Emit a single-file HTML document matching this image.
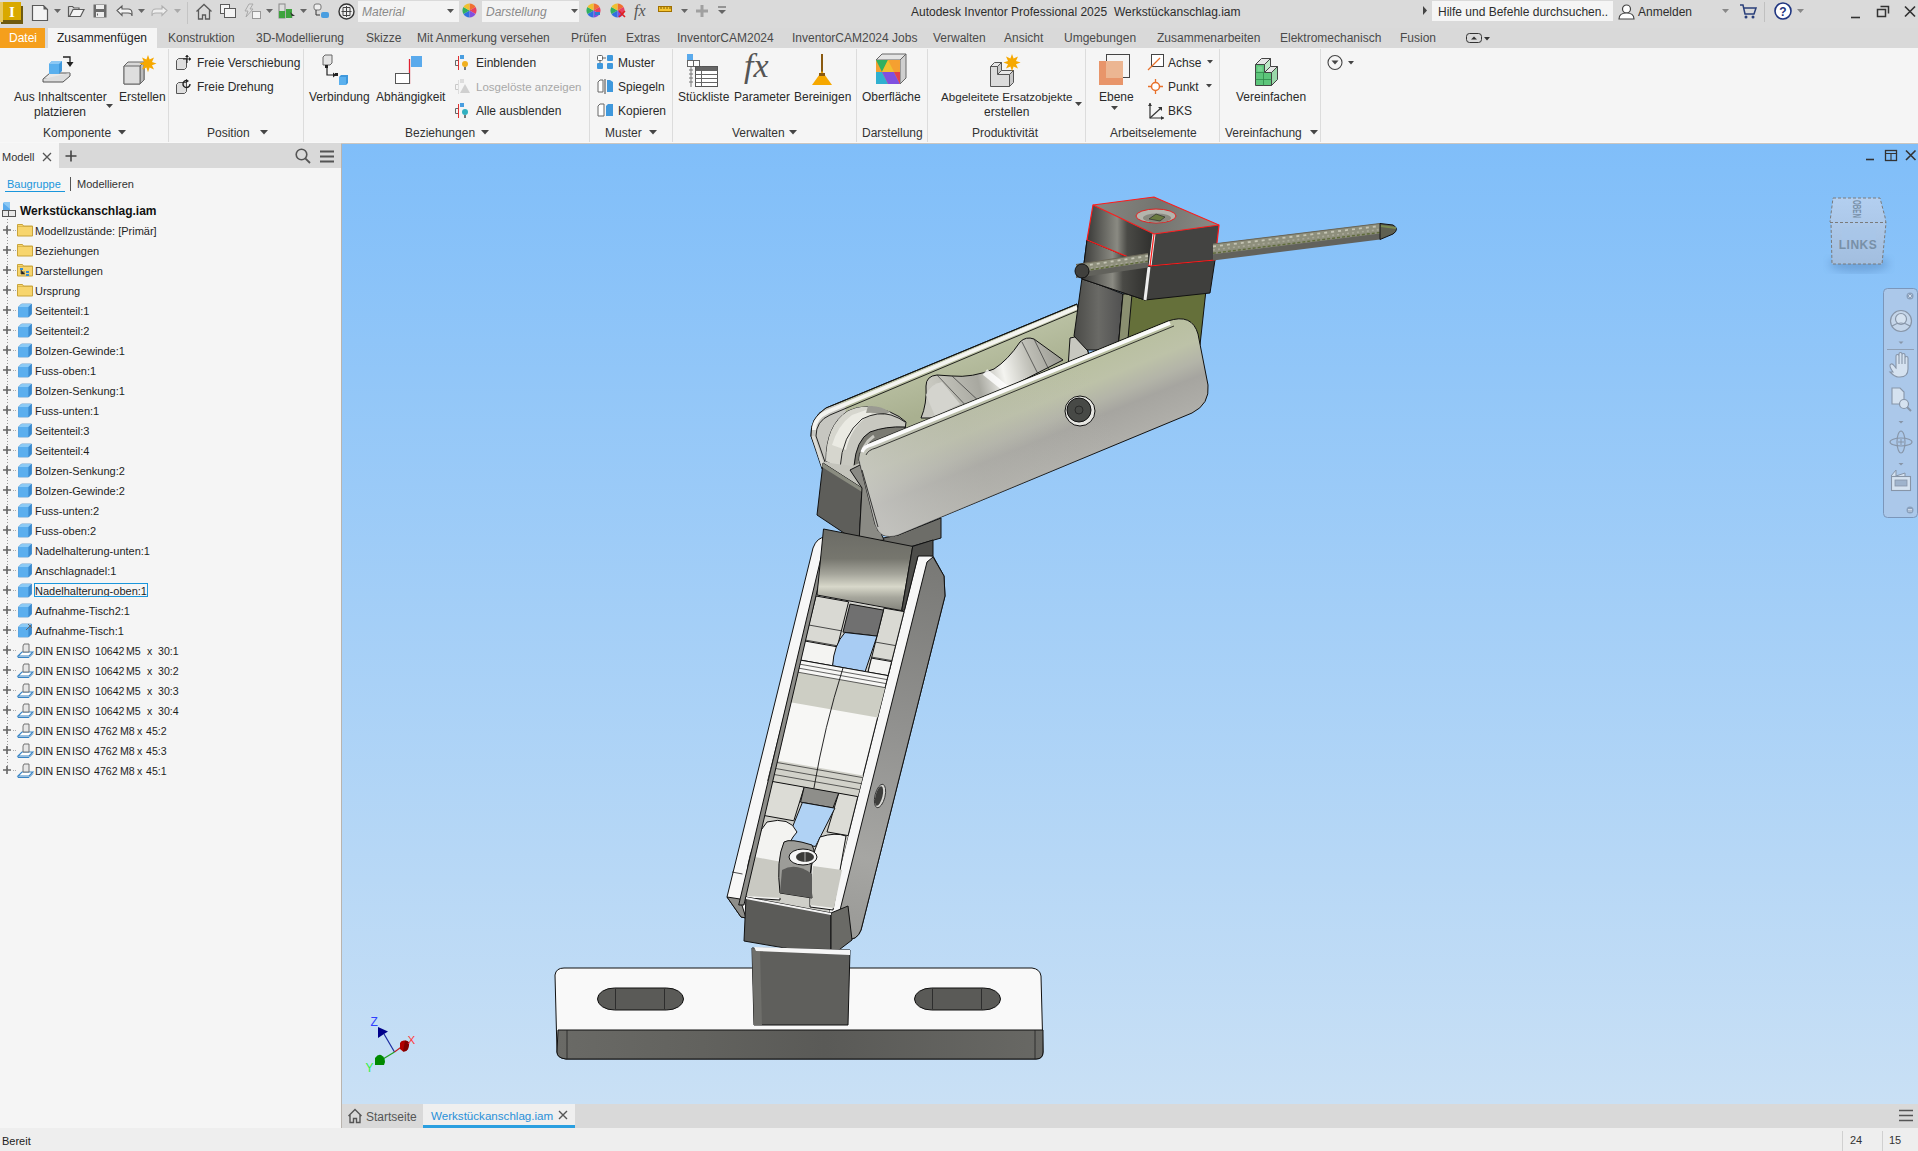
<!DOCTYPE html>
<html><head><meta charset="utf-8"><title>Inventor</title>
<style>
*{margin:0;padding:0;box-sizing:border-box}
html,body{width:1918px;height:1151px;overflow:hidden}
body{position:relative;font-family:"Liberation Sans",sans-serif;font-size:12px;color:#2a2a2a;background:#f5f5f5}
.a{position:absolute;white-space:nowrap}
svg{position:absolute;overflow:visible}
</style></head><body>

<div class="a" style="left:0px;top:0px;width:1918px;height:28px;background:#dadada;"></div>
<div class="a" style="left:0px;top:28px;width:1918px;height:20px;background:#d9d9d9;"></div>
<div class="a" style="left:0px;top:48px;width:1918px;height:95px;background:#f5f5f5;"></div>
<div class="a" style="left:0px;top:142px;width:1918px;height:1px;background:#f8f8f8;"></div>
<div class="a" style="left:0px;top:144px;width:341px;height:984px;background:#f5f5f5;"></div>
<div class="a" style="left:0px;top:143px;width:341px;height:25px;background:#d9d9d9;"></div>
<div class="a" style="left:0px;top:143px;width:59px;height:25px;background:#f5f5f5;"></div>
<div class="a" style="left:341px;top:143px;width:1px;height:985px;background:#b9b4ae;"></div>
<div class="a" style="left:341px;top:143px;width:1577px;height:1px;background:#cbc6c0;"></div>
<div class="a" style="left:342px;top:144px;width:1576px;height:960px;background:linear-gradient(#80bef9,#c9e0f5);"></div>
<div class="a" style="left:342px;top:1104px;width:1576px;height:24px;background:#d9d9d9;"></div>
<div class="a" style="left:423px;top:1104px;width:152px;height:24px;background:#efefef;"></div>
<div class="a" style="left:423px;top:1125px;width:152px;height:3px;background:#2a9fe0;"></div>
<div class="a" style="left:0px;top:1128px;width:1918px;height:23px;background:#eeeeee;"></div>
<svg style="left:0;top:0" width="26" height="26"><rect x="1" y="6" width="22" height="18" fill="#6e5a10"/><rect x="0" y="2" width="3" height="20" fill="#e8c860"/><rect x="3" y="2" width="18" height="18" fill="#d9a900"/><text x="12" y="17" font-family="Liberation Serif" font-weight="bold" font-size="15" fill="#fff" text-anchor="middle">I</text></svg>
<svg style="left:32px;top:4px" width="20" height="16"><path d="M0.5 1.5h11l4 4v11h-15z" fill="#f4f4f4" stroke="#5a5a5a" stroke-width="1.2"/><path d="M11.5 1.5l4 4h-4z" fill="#5a5a5a"/></svg>
<svg style="left:54px;top:9px" width="8" height="5"><path d="M0 0h7l-3.5 4z" fill="#666"/></svg>
<svg style="left:68px;top:4px" width="18" height="14"><path d="M0.5 2.5v10h12l3.5-7h-11l-3.5 7M0.5 2.5h4l1.5 1.5h5v1.5" fill="#f4f4f4" stroke="#5a5a5a" stroke-width="1.2"/></svg>
<svg style="left:93px;top:4px" width="15" height="15"><rect x="0.5" y="0.5" width="13" height="13" fill="#6b6b6b"/><rect x="3" y="1" width="8" height="4" fill="#eee"/><rect x="3" y="8" width="8" height="5" fill="#eee"/><rect x="4" y="9.5" width="1" height="2" fill="#666"/></svg>
<svg style="left:116px;top:5px" width="18" height="12"><path d="M1 5.5l5-4.5v3h6c3 0 4 2 4 4v3c0-2-1-3-4-3h-6v2.5z" fill="#f4f4f4" stroke="#5a5a5a" stroke-width="1.1"/></svg>
<svg style="left:138px;top:9px" width="8" height="5"><path d="M0 0h7l-3.5 4z" fill="#666"/></svg>
<svg style="left:151px;top:5px" width="18" height="12"><path d="M16 5.5l-5-4.5v3h-6c-3 0-4 2-4 4v3c0-2 1-3 4-3h6v2.5z" fill="#eee" stroke="#b0b0b0" stroke-width="1.1"/></svg>
<svg style="left:174px;top:9px" width="8" height="5"><path d="M0 0h7l-3.5 4z" fill="#aaa"/></svg>
<div class="a" style="left:187px;top:2px;width:1px;height:22px;background:#c4c4c4;"></div>
<svg style="left:195px;top:3px" width="18" height="17"><path d="M1.5 8.5l7.5-7 7.5 7M3.5 7v9h4v-4h3v4h4v-9" fill="none" stroke="#5a5a5a" stroke-width="1.3"/></svg>
<svg style="left:220px;top:4px" width="17" height="15"><rect x="0.5" y="0.5" width="9" height="9" fill="#f4f4f4" stroke="#5a5a5a"/><rect x="4.5" y="4.5" width="11" height="9" fill="#f4f4f4" stroke="#5a5a5a"/></svg>
<svg style="left:244px;top:3px" width="18" height="16"><path d="M5 1l-4 7h3l-2 6 7-8h-3l3-5z" fill="#ddd" stroke="#aaa"/><rect x="8.5" y="8.5" width="8" height="7" fill="#f4f4f4" stroke="#999"/></svg>
<svg style="left:266px;top:9px" width="8" height="5"><path d="M0 0h7l-3.5 4z" fill="#666"/></svg>
<svg style="left:278px;top:3px" width="18" height="17"><rect x="1" y="1" width="6" height="14" fill="#ddd" stroke="#888"/><rect x="1" y="8" width="6" height="7" fill="#3fa33f"/><rect x="8" y="6" width="6" height="9" fill="#3fa33f"/><path d="M12 9l5 4h-3l1 3z" fill="#333"/></svg>
<svg style="left:300px;top:9px" width="8" height="5"><path d="M0 0h7l-3.5 4z" fill="#666"/></svg>
<svg style="left:313px;top:3px" width="18" height="17"><rect x="1" y="1" width="7" height="6" rx="2" fill="#eee" stroke="#777"/><rect x="8" y="9" width="8" height="6" rx="2" fill="#4a9ee0"/><path d="M3 7v5h4" fill="none" stroke="#333"/></svg>
<svg style="left:338px;top:3px" width="17" height="17"><circle cx="8.5" cy="8.5" r="7.5" fill="#eee" stroke="#333" stroke-width="1.4"/><path d="M5 4.5h7M3.5 8.5h10M5 12.5h7M5 4.5v8M8.5 3v11M12 4.5v8" stroke="#444" stroke-width="1"/></svg>
<div class="a" style="left:358px;top:1px;width:101px;height:21px;background:#f3f3f3;"></div>
<div class="a" style="left:362px;top:4.8px;font-size:12px;line-height:14px;color:#8a8a8a;font-style:italic">Material</div>
<svg style="left:447px;top:9px" width="8" height="5"><path d="M0 0h7l-3.5 4z" fill="#555"/></svg>
<svg style="left:462px;top:3px" width="15" height="15"><g transform="translate(7.5,7.5)"><path d="M0 0L0-7A7 7 0 0 1 6.06-3.5z" fill="#f07030"/><path d="M0 0L6.06-3.5A7 7 0 0 1 6.06 3.5z" fill="#e84060"/><path d="M0 0L6.06 3.5A7 7 0 0 1 0 7z" fill="#8050e0"/><path d="M0 0L0 7A7 7 0 0 1 -6.06 3.5z" fill="#3070e0"/><path d="M0 0L-6.06 3.5A7 7 0 0 1 -6.06-3.5z" fill="#30b060"/><path d="M0 0L-6.06-3.5A7 7 0 0 1 0-7z" fill="#f0c030"/></g></svg>
<div class="a" style="left:482px;top:1px;width:97px;height:21px;background:#f3f3f3;"></div>
<div class="a" style="left:486px;top:4.8px;font-size:12px;line-height:14px;color:#8a8a8a;font-style:italic">Darstellung</div>
<svg style="left:571px;top:9px" width="8" height="5"><path d="M0 0h7l-3.5 4z" fill="#555"/></svg>
<svg style="left:586px;top:3px" width="15" height="15"><g transform="translate(7.5,7.5)"><path d="M0 0L0-7A7 7 0 0 1 6.06-3.5z" fill="#f07030"/><path d="M0 0L6.06-3.5A7 7 0 0 1 6.06 3.5z" fill="#e84060"/><path d="M0 0L6.06 3.5A7 7 0 0 1 0 7z" fill="#8050e0"/><path d="M0 0L0 7A7 7 0 0 1 -6.06 3.5z" fill="#3070e0"/><path d="M0 0L-6.06 3.5A7 7 0 0 1 -6.06-3.5z" fill="#30b060"/><path d="M0 0L-6.06-3.5A7 7 0 0 1 0-7z" fill="#f0c030"/></g></svg>
<svg style="left:595px;top:12px" width="6" height="6"><path d="M0 0h5v3h-5z" fill="#2b7fd0"/></svg>
<svg style="left:610px;top:3px" width="15" height="15"><g transform="translate(7.5,7.5)"><path d="M0 0L0-7A7 7 0 0 1 6.06-3.5z" fill="#f07030"/><path d="M0 0L6.06-3.5A7 7 0 0 1 6.06 3.5z" fill="#e84060"/><path d="M0 0L6.06 3.5A7 7 0 0 1 0 7z" fill="#8050e0"/><path d="M0 0L0 7A7 7 0 0 1 -6.06 3.5z" fill="#3070e0"/><path d="M0 0L-6.06 3.5A7 7 0 0 1 -6.06-3.5z" fill="#30b060"/><path d="M0 0L-6.06-3.5A7 7 0 0 1 0-7z" fill="#f0c030"/></g></svg>
<svg style="left:619px;top:11px" width="7" height="7"><path d="M0 0l6 6M6 0l-6 6" stroke="#e02020" stroke-width="1.6"/></svg>
<div class="a" style="left:634px;top:1px;font-family:'Liberation Serif';font-style:italic;font-size:16px;color:#555;line-height:20px">fx</div>
<svg style="left:658px;top:5px" width="15" height="8"><rect x="0.5" y="1.5" width="13" height="5" fill="#f5c430" stroke="#a07000"/><path d="M3 2v2M6 2v2M9 2v2M12 2v2" stroke="#7a5a00"/></svg>
<svg style="left:681px;top:9px" width="8" height="5"><path d="M0 0h7l-3.5 4z" fill="#666"/></svg>
<svg style="left:695px;top:4px" width="14" height="14"><path d="M7 1v12M1 7h12" stroke="#a0a0a0" stroke-width="3"/></svg>
<svg style="left:717px;top:6px" width="10" height="10"><path d="M1 1h8" stroke="#666" stroke-width="1.2"/><path d="M1 4h8l-4 4z" fill="#666"/></svg>
<div class="a" style="left:911px;top:5.3px;font-size:12px;line-height:14px;color:#2d2d2d;">Autodesk Inventor Professional 2025</div>
<div class="a" style="left:1114px;top:5.3px;font-size:12px;line-height:14px;color:#2d2d2d;">Werkstückanschlag.iam</div>
<svg style="left:1423px;top:6px" width="5" height="9"><path d="M0 0l4 4.5-4 4.5z" fill="#444"/></svg>
<div class="a" style="left:1432px;top:1px;width:181px;height:20px;background:#f5f5f5;"></div>
<div class="a" style="left:1438px;top:4.8px;font-size:12px;line-height:14px;color:#2d2d2d;">Hilfe und Befehle durchsuchen..</div>
<svg style="left:1618px;top:3px" width="17" height="17"><circle cx="8.5" cy="6" r="4" fill="#fff" stroke="#444" stroke-width="1.2"/><path d="M1 16c0-4 3-6 7.5-6s7.5 2 7.5 6z" fill="#fff" stroke="#444" stroke-width="1.2"/></svg>
<div class="a" style="left:1638px;top:5.3px;font-size:12px;line-height:14px;color:#2d2d2d;">Anmelden</div>
<svg style="left:1722px;top:9px" width="8" height="5"><path d="M0 0h7l-3.5 4z" fill="#888"/></svg>
<svg style="left:1739px;top:3px" width="18" height="16"><path d="M1 2h3l2 9h9l2-6h-12" fill="none" stroke="#2a3f7a" stroke-width="1.5"/><circle cx="7" cy="14" r="1.5" fill="#2a3f7a"/><circle cx="14" cy="14" r="1.5" fill="#2a3f7a"/></svg>
<div class="a" style="left:1764px;top:2px;width:1px;height:20px;background:#c0c0c0;"></div>
<svg style="left:1774px;top:2px" width="19" height="19"><circle cx="9" cy="9" r="8" fill="#fff" stroke="#1f3580" stroke-width="1.6"/><text x="9" y="13.5" font-family="Liberation Sans" font-weight="bold" font-size="12" fill="#1f3580" text-anchor="middle">?</text></svg>
<svg style="left:1797px;top:9px" width="8" height="5"><path d="M0 0h7l-3.5 4z" fill="#888"/></svg>
<svg style="left:1850px;top:4px" width="68" height="16"><path d="M1 13.5h9" stroke="#333" stroke-width="1.6"/><path d="M27.5 5.5h8v7h-8zM30.5 2.5h8v7" fill="none" stroke="#333" stroke-width="1.5"/><path d="M55 2.5l10 10M65 2.5l-10 10" stroke="#333" stroke-width="1.7"/></svg>
<div class="a" style="left:0px;top:28px;width:45px;height:20px;background:#f59f1c;"></div>
<div class="a" style="left:9px;top:30.8px;font-size:12px;line-height:14px;color:#ffffff;">Datei</div>
<div class="a" style="left:48px;top:28px;width:109px;height:20px;background:#f5f5f5;"></div>
<div class="a" style="left:57px;top:30.8px;font-size:12px;line-height:14px;color:#222;">Zusammenfügen</div>
<div class="a" style="left:168px;top:30.8px;font-size:12px;line-height:14px;color:#4a4a4a;">Konstruktion</div>
<div class="a" style="left:256px;top:30.8px;font-size:12px;line-height:14px;color:#4a4a4a;">3D-Modellierung</div>
<div class="a" style="left:366px;top:30.8px;font-size:12px;line-height:14px;color:#4a4a4a;">Skizze</div>
<div class="a" style="left:417px;top:30.8px;font-size:12px;line-height:14px;color:#4a4a4a;">Mit Anmerkung versehen</div>
<div class="a" style="left:571px;top:30.8px;font-size:12px;line-height:14px;color:#4a4a4a;">Prüfen</div>
<div class="a" style="left:626px;top:30.8px;font-size:12px;line-height:14px;color:#4a4a4a;">Extras</div>
<div class="a" style="left:677px;top:30.8px;font-size:12px;line-height:14px;color:#4a4a4a;">InventorCAM2024</div>
<div class="a" style="left:792px;top:30.8px;font-size:12px;line-height:14px;color:#4a4a4a;">InventorCAM2024 Jobs</div>
<div class="a" style="left:933px;top:30.8px;font-size:12px;line-height:14px;color:#4a4a4a;">Verwalten</div>
<div class="a" style="left:1004px;top:30.8px;font-size:12px;line-height:14px;color:#4a4a4a;">Ansicht</div>
<div class="a" style="left:1064px;top:30.8px;font-size:12px;line-height:14px;color:#4a4a4a;">Umgebungen</div>
<div class="a" style="left:1157px;top:30.8px;font-size:12px;line-height:14px;color:#4a4a4a;">Zusammenarbeiten</div>
<div class="a" style="left:1280px;top:30.8px;font-size:12px;line-height:14px;color:#4a4a4a;">Elektromechanisch</div>
<div class="a" style="left:1400px;top:30.8px;font-size:12px;line-height:14px;color:#4a4a4a;">Fusion</div>
<svg style="left:1466px;top:33px" width="26" height="12"><rect x="0.5" y="0.5" width="15" height="9" rx="3" fill="none" stroke="#333"/><path d="M5 6.5h6l-3-3z" fill="#333"/><path d="M18 4h6l-3 3.5z" fill="#333"/></svg>
<div class="a" style="left:168px;top:49px;width:1px;height:93px;background:#dcdcdc;"></div>
<div class="a" style="left:303px;top:49px;width:1px;height:93px;background:#dcdcdc;"></div>
<div class="a" style="left:589px;top:49px;width:1px;height:93px;background:#dcdcdc;"></div>
<div class="a" style="left:672px;top:49px;width:1px;height:93px;background:#dcdcdc;"></div>
<div class="a" style="left:856px;top:49px;width:1px;height:93px;background:#dcdcdc;"></div>
<div class="a" style="left:927px;top:49px;width:1px;height:93px;background:#dcdcdc;"></div>
<div class="a" style="left:1085px;top:49px;width:1px;height:93px;background:#dcdcdc;"></div>
<div class="a" style="left:1219px;top:49px;width:1px;height:93px;background:#dcdcdc;"></div>
<div class="a" style="left:1320px;top:49px;width:1px;height:93px;background:#dcdcdc;"></div>
<div class="a" style="left:43px;top:125.8px;font-size:12px;line-height:14px;color:#333;">Komponente</div>
<svg style="left:118px;top:130px" width="9" height="6"><path d="M0 0h8l-4 4.5z" fill="#444"/></svg>
<div class="a" style="left:207px;top:125.8px;font-size:12px;line-height:14px;color:#333;">Position</div>
<svg style="left:260px;top:130px" width="9" height="6"><path d="M0 0h8l-4 4.5z" fill="#444"/></svg>
<div class="a" style="left:405px;top:125.8px;font-size:12px;line-height:14px;color:#333;">Beziehungen</div>
<svg style="left:481px;top:130px" width="9" height="6"><path d="M0 0h8l-4 4.5z" fill="#444"/></svg>
<div class="a" style="left:605px;top:125.8px;font-size:12px;line-height:14px;color:#333;">Muster</div>
<svg style="left:649px;top:130px" width="9" height="6"><path d="M0 0h8l-4 4.5z" fill="#444"/></svg>
<div class="a" style="left:732px;top:125.8px;font-size:12px;line-height:14px;color:#333;">Verwalten</div>
<svg style="left:789px;top:130px" width="9" height="6"><path d="M0 0h8l-4 4.5z" fill="#444"/></svg>
<div class="a" style="left:862px;top:125.8px;font-size:12px;line-height:14px;color:#333;">Darstellung</div>
<div class="a" style="left:972px;top:125.8px;font-size:12px;line-height:14px;color:#333;">Produktivität</div>
<div class="a" style="left:1110px;top:125.8px;font-size:12px;line-height:14px;color:#333;">Arbeitselemente</div>
<div class="a" style="left:1225px;top:125.8px;font-size:12px;line-height:14px;color:#333;">Vereinfachung</div>
<svg style="left:1310px;top:130px" width="9" height="6"><path d="M0 0h8l-4 4.5z" fill="#444"/></svg>
<svg style="left:42px;top:55px" width="36" height="30"><path d="M1 24l7-6h20l-7 6z" fill="#e8e8e8" stroke="#555" stroke-width="1"/><path d="M1 24v3h20l7-6v-3" fill="#ddd" stroke="#555"/><path d="M7 9l3-3h10v10l-3 3h-10z" fill="#3f98dc"/><path d="M7 9h10v10h-10z" fill="#5ab0ee"/><path d="M7 9l3-3h10l-3 3z" fill="#8cc8f4"/><path d="M21 2h7v6" fill="none" stroke="#222" stroke-width="1.3"/><path d="M24.5 7h7l-3.5 5z" fill="#222"/></svg>
<div class="a" style="left:14px;top:89.8px;font-size:12px;line-height:14px;color:#2a2a2a;">Aus Inhaltscenter</div>
<div class="a" style="left:34px;top:104.8px;font-size:12px;line-height:14px;color:#2a2a2a;">platzieren</div>
<svg style="left:106px;top:104px" width="8" height="5"><path d="M0 0h7l-3.5 4z" fill="#444"/></svg>
<svg style="left:121px;top:53px" width="38" height="34"><path d="M3 13l4-4h16v18l-4 4h-16z" fill="#d8d8d8" stroke="#666"/><path d="M19 13l4-4v18l-4 4z" fill="#bcbcbc" stroke="#666"/><path d="M3 13h16v18h-16z" fill="#dedede" stroke="#666"/><path d="M27 2l1.6 4.6 4.4-2-2 4.4 4.6 1.6-4.6 1.6 2 4.4-4.4-2-1.6 4.6-1.6-4.6-4.4 2 2-4.4-4.6-1.6 4.6-1.6-2-4.4 4.4 2z" fill="#f6a800"/></svg>
<div class="a" style="left:119px;top:89.8px;font-size:12px;line-height:14px;color:#2a2a2a;">Erstellen</div>
<svg style="left:176px;top:55px" width="16" height="16"><path d="M0.5 5.5l2-2h8v9l-2 2h-8z" fill="#dedede" stroke="#555"/><path d="M11 0v8M7 4h8" stroke="#222" stroke-width="1.1"/><path d="M11 0l-2 2h4zM15 4l-2-2v4z" fill="#222"/></svg>
<div class="a" style="left:197px;top:55.8px;font-size:12px;line-height:14px;color:#2a2a2a;">Freie Verschiebung</div>
<svg style="left:176px;top:79px" width="16" height="16"><path d="M0.5 5.5l2-2h8v9l-2 2h-8z" fill="#dedede" stroke="#555"/><path d="M14 5a3.5 3.5 0 1 1 -3-3.4" fill="none" stroke="#222" stroke-width="1.4"/><path d="M10 0l3 2-3 2z" fill="#222"/></svg>
<div class="a" style="left:197px;top:79.8px;font-size:12px;line-height:14px;color:#2a2a2a;">Freie Drehung</div>
<svg style="left:322px;top:54px" width="34" height="32"><path d="M1 3l2-2h7v8l-2 2h-7z" fill="#e4e4e4" stroke="#666"/><path d="M5 13v8h6" fill="none" stroke="#222" stroke-width="1.2"/><path d="M11 18.5l3 2.5-3 2.5z" fill="#222"/><rect x="3" y="11" width="3" height="3" fill="#222"/><rect x="13" y="19" width="3" height="3" fill="#222"/><path d="M17 23l2-2h7v8l-2 2h-7z" fill="#3f98dc"/><path d="M17 23h7v8h-7z" fill="#5ab0ee"/></svg>
<div class="a" style="left:309px;top:89.8px;font-size:12px;line-height:14px;color:#2a2a2a;">Verbindung</div>
<svg style="left:394px;top:54px" width="36" height="32"><rect x="17" y="2" width="11" height="11" fill="#5aaaec"/><path d="M15.5 5v25" stroke="#e02030" stroke-width="1.3"/><rect x="1.5" y="19.5" width="14" height="10" fill="#fff" stroke="#555"/></svg>
<div class="a" style="left:376px;top:89.8px;font-size:12px;line-height:14px;color:#2a2a2a;">Abhängigkeit</div>
<svg style="left:455px;top:54px" width="16" height="17"><path d="M0.5 6.5h3M0.5 6.5v5h3" fill="none" stroke="#666"/><path d="M3.5 2v14" stroke="#e03030" stroke-width="1"/><rect x="5" y="1" width="4" height="4" fill="#4a9ee0"/><circle cx="10" cy="10" r="3" fill="#f0b020"/><rect x="9" y="13" width="2" height="3" fill="#777"/></svg>
<div class="a" style="left:476px;top:55.8px;font-size:12px;line-height:14px;color:#2a2a2a;">Einblenden</div>
<svg style="left:455px;top:78px" width="16" height="17"><path d="M0.5 6.5h3M0.5 6.5v5h3" fill="none" stroke="#c8c8c8"/><path d="M3.5 2v14" stroke="#ddd"/><rect x="5" y="1" width="4" height="4" fill="#ddd"/><path d="M10 6l5 9h-10z" fill="#d0d0d0"/></svg>
<div class="a" style="left:476px;top:80.0px;font-size:11.5px;line-height:14px;color:#a8a8a8;">Losgelöste anzeigen</div>
<svg style="left:455px;top:102px" width="16" height="17"><path d="M0.5 6.5h3M0.5 6.5v5h3" fill="none" stroke="#666"/><path d="M3.5 2v14" stroke="#e03030" stroke-width="1"/><rect x="5" y="1" width="4" height="4" fill="#4a9ee0"/><circle cx="10" cy="10" r="3" fill="#30b0c0"/><rect x="9" y="13" width="2" height="3" fill="#777"/></svg>
<div class="a" style="left:476px;top:103.8px;font-size:12px;line-height:14px;color:#2a2a2a;">Alle ausblenden</div>
<svg style="left:597px;top:55px" width="17" height="15"><rect x="0.5" y="0.5" width="5" height="5" rx="1" fill="#fff" stroke="#666"/><rect x="10" y="0" width="6" height="6" rx="1" fill="#3f98dc"/><rect x="0" y="8" width="6" height="6" rx="1" fill="#3f98dc"/><rect x="10" y="8" width="6" height="6" rx="1" fill="#3f98dc"/><path d="M6 3h3M3 6v2" stroke="#666"/></svg>
<div class="a" style="left:618px;top:55.8px;font-size:12px;line-height:14px;color:#2a2a2a;">Muster</div>
<svg style="left:597px;top:79px" width="17" height="15"><path d="M1 3l2-2h3v12h-5z" fill="#fff" stroke="#666"/><path d="M8 0v15" stroke="#444"/><path d="M10 1h3l3 2v10h-6z" fill="#3f98dc"/></svg>
<div class="a" style="left:618px;top:79.8px;font-size:12px;line-height:14px;color:#2a2a2a;">Spiegeln</div>
<svg style="left:597px;top:103px" width="17" height="15"><path d="M1 3l2-2h4v12h-6z" fill="#fff" stroke="#666"/><path d="M9 3l2-2h5v12h-7z" fill="#3f98dc"/></svg>
<div class="a" style="left:618px;top:103.8px;font-size:12px;line-height:14px;color:#2a2a2a;">Kopieren</div>
<svg style="left:686px;top:53px" width="34" height="34"><rect x="1" y="1" width="6" height="6" fill="#5aaaec"/><rect x="1.5" y="7.5" width="6" height="6" fill="#fff" stroke="#666"/><rect x="7.5" y="7.5" width="6" height="6" fill="#fff" stroke="#666"/><rect x="9.5" y="13.5" width="22" height="20" fill="#fff" stroke="#555"/><path d="M9.5 17.5h22M9.5 21.5h22M9.5 25.5h22M9.5 29.5h22M15.5 13.5v20" stroke="#666"/><rect x="10" y="14" width="21" height="3" fill="#666"/><path d="M5 14v20M3 17h4M3 21h4M3 25h4M3 29h4" stroke="#777"/></svg>
<div class="a" style="left:678px;top:89.8px;font-size:12px;line-height:14px;color:#2a2a2a;">Stückliste</div>
<div class="a" style="left:744px;top:46px;font-family:'Liberation Serif';font-style:italic;font-size:34px;line-height:40px;color:#555">fx</div>
<div class="a" style="left:734px;top:89.8px;font-size:12px;line-height:14px;color:#2a2a2a;">Parameter</div>
<svg style="left:811px;top:53px" width="22" height="34"><path d="M11 1v22" stroke="#8a5a10" stroke-width="2"/><path d="M11 18l-10 14h20z" fill="#f6a800"/><rect x="8" y="20" width="6" height="3" fill="#8a5a10"/></svg>
<div class="a" style="left:794px;top:89.8px;font-size:12px;line-height:14px;color:#2a2a2a;">Bereinigen</div>
<svg style="left:874px;top:53px" width="34" height="34"><path d="M2 7l6-6h24l-6 6z" fill="#e4e4e4" stroke="#666"/><path d="M26 7l6-6v24l-6 6z" fill="#cfcfcf" stroke="#666"/><path d="M2 7h24v24h-24z" fill="#f5a030"/><path d="M2 7h12l-6 12z" fill="#30b060"/><path d="M2 19l6 0 6 12h-12z" fill="#30b0d0"/><path d="M14 31l-6-12 12 0 6 12z" fill="#8050e0"/><path d="M20 19h6v12z" fill="#e04050"/><path d="M14 7l6 12h-12z" fill="#f0c030"/></svg>
<div class="a" style="left:862px;top:89.8px;font-size:12px;line-height:14px;color:#2a2a2a;">Oberfläche</div>
<svg style="left:988px;top:53px" width="36" height="34"><path d="M2.5 33.5v-20l4-4h7l-4 4v8h12l4-4h0v0" fill="none"/><path d="M2.5 13.5l4-4h7l-4 4z" fill="#e8e8e8" stroke="#555"/><path d="M9.5 13.5l4-4v8l-4 4z" fill="#c8c8c8" stroke="#555"/><path d="M9.5 21.5l4-4h12l-4 4z" fill="#e8e8e8" stroke="#555"/><path d="M21.5 21.5l4-4v12l-4 4z" fill="#c8c8c8" stroke="#555"/><path d="M2.5 13.5h7v8h12v12h-19z" fill="#dcdcdc" stroke="#555"/><path d="M24 1l1.6 4.6 4.4-2-2 4.4 4.6 1.6-4.6 1.6 2 4.4-4.4-2-1.6 4.6-1.6-4.6-4.4 2 2-4.4-4.6-1.6 4.6-1.6-2-4.4 4.4 2z" fill="#f6a800"/></svg>
<div class="a" style="left:941px;top:90.0px;font-size:11.6px;line-height:14px;color:#2a2a2a;">Abgeleitete Ersatzobjekte</div>
<div class="a" style="left:984px;top:104.8px;font-size:12px;line-height:14px;color:#2a2a2a;">erstellen</div>
<svg style="left:1075px;top:102px" width="8" height="5"><path d="M0 0h7l-3.5 4z" fill="#444"/></svg>
<svg style="left:1098px;top:53px" width="34" height="34"><rect x="8.5" y="1.5" width="23" height="23" fill="none" stroke="#444"/><rect x="1" y="8" width="24" height="24" fill="#e8956a"/><rect x="8" y="8" width="17" height="17" fill="#ecb692"/></svg>
<div class="a" style="left:1099px;top:89.8px;font-size:12px;line-height:14px;color:#2a2a2a;">Ebene</div>
<svg style="left:1111px;top:106px" width="8" height="5"><path d="M0 0h7l-3.5 4z" fill="#444"/></svg>
<svg style="left:1147px;top:54px" width="18" height="17"><rect x="4.5" y="0.5" width="12" height="12" fill="#fff" stroke="#444"/><path d="M1 16l12-12" stroke="#e8702a" stroke-width="1.3"/></svg>
<div class="a" style="left:1168px;top:55.8px;font-size:12px;line-height:14px;color:#2a2a2a;">Achse</div>
<svg style="left:1207px;top:60px" width="7" height="5"><path d="M0 0h6l-3 3.5z" fill="#444"/></svg>
<svg style="left:1147px;top:78px" width="17" height="17"><path d="M8.5 1v15M1 8.5h15" stroke="#e8702a" stroke-width="1.3"/><circle cx="8.5" cy="8.5" r="4" fill="#fff" stroke="#e8702a" stroke-width="1.5"/></svg>
<div class="a" style="left:1168px;top:79.8px;font-size:12px;line-height:14px;color:#2a2a2a;">Punkt</div>
<svg style="left:1206px;top:84px" width="7" height="5"><path d="M0 0h6l-3 3.5z" fill="#444"/></svg>
<svg style="left:1147px;top:102px" width="18" height="18"><path d="M3 1v15h14" fill="none" stroke="#333" stroke-width="1.2"/><path d="M3 16l11-10" stroke="#333" stroke-width="1.2"/><path d="M1 4l2-3 2 3zM14 14l3 2-3 2zM11 5h4v4z" fill="#333"/></svg>
<div class="a" style="left:1168px;top:103.8px;font-size:12px;line-height:14px;color:#2a2a2a;">BKS</div>
<svg style="left:1254px;top:55px" width="32" height="32"><path d="M1.5 9.5l6-6h9l-6 6z" fill="#e6e6e6" stroke="#444"/><path d="M10.5 9.5l6-6v8l-6 6z" fill="#bfe8c8" stroke="#444"/><path d="M10.5 17.5l6-6h7l-6 6z" fill="#e6e6e6" stroke="#444"/><path d="M17.5 17.5l6-6v13l-6 6z" fill="#9ad8aa" stroke="#444"/><path d="M1.5 9.5h9v8h7v13h-16z" fill="#5cc57a" stroke="#444"/><path d="M1.5 17.5h9M9.5 17.5v13M1.5 24.5h16" stroke="#2f8a4a" stroke-width="0.8"/><path d="M3.5 11.5h5v5h-5z" fill="#7ad492"/></svg>
<div class="a" style="left:1236px;top:89.8px;font-size:12px;line-height:14px;color:#2a2a2a;">Vereinfachen</div>
<svg style="left:1327px;top:55px" width="28" height="16"><circle cx="8" cy="7.5" r="7" fill="none" stroke="#444" stroke-width="1.1"/><path d="M4.5 5.5h7l-3.5 4z" fill="#444"/><path d="M21 6h6l-3 3.5z" fill="#444"/></svg>
<div class="a" style="left:2px;top:150.2px;font-size:11px;line-height:14px;color:#333;">Modell</div>
<svg style="left:42px;top:152px" width="10" height="10"><path d="M1 1l8 8M9 1l-8 8" stroke="#555" stroke-width="1.3"/></svg>
<svg style="left:65px;top:150px" width="12" height="12"><path d="M6 0.5v11M0.5 6h11" stroke="#444" stroke-width="1.6"/></svg>
<svg style="left:295px;top:148px" width="17" height="17"><circle cx="6.5" cy="6.5" r="5.3" fill="none" stroke="#555" stroke-width="1.6"/><path d="M10.3 10.3l4.7 4.7" stroke="#555" stroke-width="1.8"/></svg>
<svg style="left:320px;top:150px" width="15" height="13"><path d="M0 1.5h14M0 6.5h14M0 11.5h14" stroke="#555" stroke-width="1.8"/></svg>
<div class="a" style="left:7px;top:177.2px;font-size:11px;line-height:14px;color:#1a96dc;">Baugruppe</div>
<div class="a" style="left:5px;top:191px;width:60px;height:1px;background:#1a96dc;"></div>
<div class="a" style="left:70px;top:177px;width:1px;height:14px;background:#555;"></div>
<div class="a" style="left:77px;top:177.2px;font-size:11px;line-height:14px;color:#333;">Modellieren</div>
<svg style="left:1px;top:202px" width="17" height="16"><rect x="2" y="1" width="7" height="7" fill="#5aaaec"/><path d="M2 1l1-1h6v7" fill="#8cc8f4"/><rect x="1.5" y="8.5" width="6" height="6" fill="#e8e8e8" stroke="#555"/><rect x="7.5" y="8.5" width="7" height="6" fill="#e8e8e8" stroke="#555"/></svg>
<div class="a" style="left:20px;top:203.8px;font-size:12px;line-height:14px;color:#111;"><b>Werkstückanschlag.iam</b></div>
<svg style="left:7px;top:219px" width="2" height="552"><path d="M0.5 0v552" stroke="#999" stroke-width="1" stroke-dasharray="1 2"/></svg>
<svg style="left:2px;top:225px" width="16" height="11"><path d="M5 1v8M1 5h8" stroke="#666" stroke-width="1.6"/><path d="M11 5.5h4" stroke="#aaa" stroke-dasharray="1 1"/></svg>
<svg style="left:17px;top:223px" width="17" height="14"><path d="M0.5 1.5h5l1 1.5h9v10h-15z" fill="#f7d56d" stroke="#c9a43a"/><path d="M0.5 3.5h15" stroke="#c9a43a" stroke-width="0.6"/></svg>
<div class="a" style="left:35px;top:223.8px;font-size:11px;line-height:14px;color:#1e1e1e;">Modellzustände: [Primär]</div>
<svg style="left:2px;top:245px" width="16" height="11"><path d="M5 1v8M1 5h8" stroke="#666" stroke-width="1.6"/><path d="M11 5.5h4" stroke="#aaa" stroke-dasharray="1 1"/></svg>
<svg style="left:17px;top:243px" width="17" height="14"><path d="M0.5 1.5h5l1 1.5h9v10h-15z" fill="#f7d56d" stroke="#c9a43a"/><path d="M0.5 3.5h15" stroke="#c9a43a" stroke-width="0.6"/></svg>
<div class="a" style="left:35px;top:243.8px;font-size:11px;line-height:14px;color:#1e1e1e;">Beziehungen</div>
<svg style="left:2px;top:265px" width="16" height="11"><path d="M5 1v8M1 5h8" stroke="#666" stroke-width="1.6"/><path d="M11 5.5h4" stroke="#aaa" stroke-dasharray="1 1"/></svg>
<svg style="left:17px;top:263px" width="17" height="14"><path d="M0.5 1.5h5l1 1.5h9v10h-15z" fill="#f7d56d" stroke="#c9a43a"/><path d="M0.5 3.5h15" stroke="#c9a43a" stroke-width="0.6"/><rect x="3" y="5" width="3" height="2" fill="#3a8ad0"/><path d="M4 7v4h4M4 9h4" stroke="#555" stroke-width="0.8"/><rect x="9" y="8" width="3" height="2" fill="#3a8ad0"/><rect x="9" y="11" width="3" height="2" fill="#3a8ad0"/></svg>
<div class="a" style="left:35px;top:263.8px;font-size:11px;line-height:14px;color:#1e1e1e;">Darstellungen</div>
<svg style="left:2px;top:285px" width="16" height="11"><path d="M5 1v8M1 5h8" stroke="#666" stroke-width="1.6"/><path d="M11 5.5h4" stroke="#aaa" stroke-dasharray="1 1"/></svg>
<svg style="left:17px;top:283px" width="17" height="14"><path d="M0.5 1.5h5l1 1.5h9v10h-15z" fill="#f7d56d" stroke="#c9a43a"/><path d="M0.5 3.5h15" stroke="#c9a43a" stroke-width="0.6"/></svg>
<div class="a" style="left:35px;top:283.8px;font-size:11px;line-height:14px;color:#1e1e1e;">Ursprung</div>
<svg style="left:2px;top:305px" width="16" height="11"><path d="M5 1v8M1 5h8" stroke="#666" stroke-width="1.6"/><path d="M11 5.5h4" stroke="#aaa" stroke-dasharray="1 1"/></svg>
<svg style="left:17px;top:303px" width="16" height="15"><path d="M1.5 4l3-3h10v10l-3 3h-10z" fill="#4b9fe0" stroke="#3a85c5" stroke-width="0.7"/><path d="M1.5 4h10v10h-10z" fill="#5aaeee"/><path d="M1.5 4l3-3h10l-3 3z" fill="#8ccaf5"/><path d="M11.5 4l3-3v10l-3 3z" fill="#3a8ad0"/></svg>
<div class="a" style="left:35px;top:303.8px;font-size:11px;line-height:14px;color:#1e1e1e;">Seitenteil:1</div>
<svg style="left:2px;top:325px" width="16" height="11"><path d="M5 1v8M1 5h8" stroke="#666" stroke-width="1.6"/><path d="M11 5.5h4" stroke="#aaa" stroke-dasharray="1 1"/></svg>
<svg style="left:17px;top:323px" width="16" height="15"><path d="M1.5 4l3-3h10v10l-3 3h-10z" fill="#4b9fe0" stroke="#3a85c5" stroke-width="0.7"/><path d="M1.5 4h10v10h-10z" fill="#5aaeee"/><path d="M1.5 4l3-3h10l-3 3z" fill="#8ccaf5"/><path d="M11.5 4l3-3v10l-3 3z" fill="#3a8ad0"/></svg>
<div class="a" style="left:35px;top:323.8px;font-size:11px;line-height:14px;color:#1e1e1e;">Seitenteil:2</div>
<svg style="left:2px;top:345px" width="16" height="11"><path d="M5 1v8M1 5h8" stroke="#666" stroke-width="1.6"/><path d="M11 5.5h4" stroke="#aaa" stroke-dasharray="1 1"/></svg>
<svg style="left:17px;top:343px" width="16" height="15"><path d="M1.5 4l3-3h10v10l-3 3h-10z" fill="#4b9fe0" stroke="#3a85c5" stroke-width="0.7"/><path d="M1.5 4h10v10h-10z" fill="#5aaeee"/><path d="M1.5 4l3-3h10l-3 3z" fill="#8ccaf5"/><path d="M11.5 4l3-3v10l-3 3z" fill="#3a8ad0"/></svg>
<div class="a" style="left:35px;top:343.8px;font-size:11px;line-height:14px;color:#1e1e1e;">Bolzen-Gewinde:1</div>
<svg style="left:2px;top:365px" width="16" height="11"><path d="M5 1v8M1 5h8" stroke="#666" stroke-width="1.6"/><path d="M11 5.5h4" stroke="#aaa" stroke-dasharray="1 1"/></svg>
<svg style="left:17px;top:363px" width="16" height="15"><path d="M1.5 4l3-3h10v10l-3 3h-10z" fill="#4b9fe0" stroke="#3a85c5" stroke-width="0.7"/><path d="M1.5 4h10v10h-10z" fill="#5aaeee"/><path d="M1.5 4l3-3h10l-3 3z" fill="#8ccaf5"/><path d="M11.5 4l3-3v10l-3 3z" fill="#3a8ad0"/></svg>
<div class="a" style="left:35px;top:363.8px;font-size:11px;line-height:14px;color:#1e1e1e;">Fuss-oben:1</div>
<svg style="left:2px;top:385px" width="16" height="11"><path d="M5 1v8M1 5h8" stroke="#666" stroke-width="1.6"/><path d="M11 5.5h4" stroke="#aaa" stroke-dasharray="1 1"/></svg>
<svg style="left:17px;top:383px" width="16" height="15"><path d="M1.5 4l3-3h10v10l-3 3h-10z" fill="#4b9fe0" stroke="#3a85c5" stroke-width="0.7"/><path d="M1.5 4h10v10h-10z" fill="#5aaeee"/><path d="M1.5 4l3-3h10l-3 3z" fill="#8ccaf5"/><path d="M11.5 4l3-3v10l-3 3z" fill="#3a8ad0"/></svg>
<div class="a" style="left:35px;top:383.8px;font-size:11px;line-height:14px;color:#1e1e1e;">Bolzen-Senkung:1</div>
<svg style="left:2px;top:405px" width="16" height="11"><path d="M5 1v8M1 5h8" stroke="#666" stroke-width="1.6"/><path d="M11 5.5h4" stroke="#aaa" stroke-dasharray="1 1"/></svg>
<svg style="left:17px;top:403px" width="16" height="15"><path d="M1.5 4l3-3h10v10l-3 3h-10z" fill="#4b9fe0" stroke="#3a85c5" stroke-width="0.7"/><path d="M1.5 4h10v10h-10z" fill="#5aaeee"/><path d="M1.5 4l3-3h10l-3 3z" fill="#8ccaf5"/><path d="M11.5 4l3-3v10l-3 3z" fill="#3a8ad0"/></svg>
<div class="a" style="left:35px;top:403.8px;font-size:11px;line-height:14px;color:#1e1e1e;">Fuss-unten:1</div>
<svg style="left:2px;top:425px" width="16" height="11"><path d="M5 1v8M1 5h8" stroke="#666" stroke-width="1.6"/><path d="M11 5.5h4" stroke="#aaa" stroke-dasharray="1 1"/></svg>
<svg style="left:17px;top:423px" width="16" height="15"><path d="M1.5 4l3-3h10v10l-3 3h-10z" fill="#4b9fe0" stroke="#3a85c5" stroke-width="0.7"/><path d="M1.5 4h10v10h-10z" fill="#5aaeee"/><path d="M1.5 4l3-3h10l-3 3z" fill="#8ccaf5"/><path d="M11.5 4l3-3v10l-3 3z" fill="#3a8ad0"/></svg>
<div class="a" style="left:35px;top:423.8px;font-size:11px;line-height:14px;color:#1e1e1e;">Seitenteil:3</div>
<svg style="left:2px;top:445px" width="16" height="11"><path d="M5 1v8M1 5h8" stroke="#666" stroke-width="1.6"/><path d="M11 5.5h4" stroke="#aaa" stroke-dasharray="1 1"/></svg>
<svg style="left:17px;top:443px" width="16" height="15"><path d="M1.5 4l3-3h10v10l-3 3h-10z" fill="#4b9fe0" stroke="#3a85c5" stroke-width="0.7"/><path d="M1.5 4h10v10h-10z" fill="#5aaeee"/><path d="M1.5 4l3-3h10l-3 3z" fill="#8ccaf5"/><path d="M11.5 4l3-3v10l-3 3z" fill="#3a8ad0"/></svg>
<div class="a" style="left:35px;top:443.8px;font-size:11px;line-height:14px;color:#1e1e1e;">Seitenteil:4</div>
<svg style="left:2px;top:465px" width="16" height="11"><path d="M5 1v8M1 5h8" stroke="#666" stroke-width="1.6"/><path d="M11 5.5h4" stroke="#aaa" stroke-dasharray="1 1"/></svg>
<svg style="left:17px;top:463px" width="16" height="15"><path d="M1.5 4l3-3h10v10l-3 3h-10z" fill="#4b9fe0" stroke="#3a85c5" stroke-width="0.7"/><path d="M1.5 4h10v10h-10z" fill="#5aaeee"/><path d="M1.5 4l3-3h10l-3 3z" fill="#8ccaf5"/><path d="M11.5 4l3-3v10l-3 3z" fill="#3a8ad0"/></svg>
<div class="a" style="left:35px;top:463.8px;font-size:11px;line-height:14px;color:#1e1e1e;">Bolzen-Senkung:2</div>
<svg style="left:2px;top:485px" width="16" height="11"><path d="M5 1v8M1 5h8" stroke="#666" stroke-width="1.6"/><path d="M11 5.5h4" stroke="#aaa" stroke-dasharray="1 1"/></svg>
<svg style="left:17px;top:483px" width="16" height="15"><path d="M1.5 4l3-3h10v10l-3 3h-10z" fill="#4b9fe0" stroke="#3a85c5" stroke-width="0.7"/><path d="M1.5 4h10v10h-10z" fill="#5aaeee"/><path d="M1.5 4l3-3h10l-3 3z" fill="#8ccaf5"/><path d="M11.5 4l3-3v10l-3 3z" fill="#3a8ad0"/></svg>
<div class="a" style="left:35px;top:483.8px;font-size:11px;line-height:14px;color:#1e1e1e;">Bolzen-Gewinde:2</div>
<svg style="left:2px;top:505px" width="16" height="11"><path d="M5 1v8M1 5h8" stroke="#666" stroke-width="1.6"/><path d="M11 5.5h4" stroke="#aaa" stroke-dasharray="1 1"/></svg>
<svg style="left:17px;top:503px" width="16" height="15"><path d="M1.5 4l3-3h10v10l-3 3h-10z" fill="#4b9fe0" stroke="#3a85c5" stroke-width="0.7"/><path d="M1.5 4h10v10h-10z" fill="#5aaeee"/><path d="M1.5 4l3-3h10l-3 3z" fill="#8ccaf5"/><path d="M11.5 4l3-3v10l-3 3z" fill="#3a8ad0"/></svg>
<div class="a" style="left:35px;top:503.8px;font-size:11px;line-height:14px;color:#1e1e1e;">Fuss-unten:2</div>
<svg style="left:2px;top:525px" width="16" height="11"><path d="M5 1v8M1 5h8" stroke="#666" stroke-width="1.6"/><path d="M11 5.5h4" stroke="#aaa" stroke-dasharray="1 1"/></svg>
<svg style="left:17px;top:523px" width="16" height="15"><path d="M1.5 4l3-3h10v10l-3 3h-10z" fill="#4b9fe0" stroke="#3a85c5" stroke-width="0.7"/><path d="M1.5 4h10v10h-10z" fill="#5aaeee"/><path d="M1.5 4l3-3h10l-3 3z" fill="#8ccaf5"/><path d="M11.5 4l3-3v10l-3 3z" fill="#3a8ad0"/></svg>
<div class="a" style="left:35px;top:523.8px;font-size:11px;line-height:14px;color:#1e1e1e;">Fuss-oben:2</div>
<svg style="left:2px;top:545px" width="16" height="11"><path d="M5 1v8M1 5h8" stroke="#666" stroke-width="1.6"/><path d="M11 5.5h4" stroke="#aaa" stroke-dasharray="1 1"/></svg>
<svg style="left:17px;top:543px" width="16" height="15"><path d="M1.5 4l3-3h10v10l-3 3h-10z" fill="#4b9fe0" stroke="#3a85c5" stroke-width="0.7"/><path d="M1.5 4h10v10h-10z" fill="#5aaeee"/><path d="M1.5 4l3-3h10l-3 3z" fill="#8ccaf5"/><path d="M11.5 4l3-3v10l-3 3z" fill="#3a8ad0"/></svg>
<div class="a" style="left:35px;top:543.8px;font-size:11px;line-height:14px;color:#1e1e1e;">Nadelhalterung-unten:1</div>
<svg style="left:2px;top:565px" width="16" height="11"><path d="M5 1v8M1 5h8" stroke="#666" stroke-width="1.6"/><path d="M11 5.5h4" stroke="#aaa" stroke-dasharray="1 1"/></svg>
<svg style="left:17px;top:563px" width="16" height="15"><path d="M1.5 4l3-3h10v10l-3 3h-10z" fill="#4b9fe0" stroke="#3a85c5" stroke-width="0.7"/><path d="M1.5 4h10v10h-10z" fill="#5aaeee"/><path d="M1.5 4l3-3h10l-3 3z" fill="#8ccaf5"/><path d="M11.5 4l3-3v10l-3 3z" fill="#3a8ad0"/></svg>
<div class="a" style="left:35px;top:563.8px;font-size:11px;line-height:14px;color:#1e1e1e;">Anschlagnadel:1</div>
<svg style="left:2px;top:585px" width="16" height="11"><path d="M5 1v8M1 5h8" stroke="#666" stroke-width="1.6"/><path d="M11 5.5h4" stroke="#aaa" stroke-dasharray="1 1"/></svg>
<svg style="left:17px;top:583px" width="16" height="15"><path d="M1.5 4l3-3h10v10l-3 3h-10z" fill="#4b9fe0" stroke="#3a85c5" stroke-width="0.7"/><path d="M1.5 4h10v10h-10z" fill="#5aaeee"/><path d="M1.5 4l3-3h10l-3 3z" fill="#8ccaf5"/><path d="M11.5 4l3-3v10l-3 3z" fill="#3a8ad0"/></svg>
<div class="a" style="left:35px;top:583.8px;font-size:11px;line-height:14px;color:#1e1e1e;">Nadelhalterung-oben:1</div>
<div class="a" style="left:34px;top:583px;width:114px;height:14px;border:1px solid #1a96dc"></div>
<svg style="left:2px;top:605px" width="16" height="11"><path d="M5 1v8M1 5h8" stroke="#666" stroke-width="1.6"/><path d="M11 5.5h4" stroke="#aaa" stroke-dasharray="1 1"/></svg>
<svg style="left:17px;top:603px" width="16" height="15"><path d="M1.5 4l3-3h10v10l-3 3h-10z" fill="#4b9fe0" stroke="#3a85c5" stroke-width="0.7"/><path d="M1.5 4h10v10h-10z" fill="#5aaeee"/><path d="M1.5 4l3-3h10l-3 3z" fill="#8ccaf5"/><path d="M11.5 4l3-3v10l-3 3z" fill="#3a8ad0"/></svg>
<div class="a" style="left:35px;top:603.8px;font-size:11px;line-height:14px;color:#1e1e1e;">Aufnahme-Tisch2:1</div>
<svg style="left:2px;top:625px" width="16" height="11"><path d="M5 1v8M1 5h8" stroke="#666" stroke-width="1.6"/><path d="M11 5.5h4" stroke="#aaa" stroke-dasharray="1 1"/></svg>
<svg style="left:17px;top:623px" width="16" height="15"><path d="M1.5 4l3-3h10v10l-3 3h-10z" fill="#4b9fe0" stroke="#3a85c5" stroke-width="0.7"/><path d="M1.5 4h10v10h-10z" fill="#5aaeee"/><path d="M1.5 4l3-3h10l-3 3z" fill="#8ccaf5"/><path d="M11.5 4l3-3v10l-3 3z" fill="#3a8ad0"/><path d="M9 7l5-5M11 1l4 4" stroke="#666" stroke-width="1"/></svg>
<div class="a" style="left:35px;top:623.8px;font-size:11px;line-height:14px;color:#1e1e1e;">Aufnahme-Tisch:1</div>
<svg style="left:2px;top:645px" width="16" height="11"><path d="M5 1v8M1 5h8" stroke="#666" stroke-width="1.6"/><path d="M11 5.5h4" stroke="#aaa" stroke-dasharray="1 1"/></svg>
<svg style="left:17px;top:643px" width="17" height="15"><path d="M1 13l4-4h11l-4 4z" fill="#fff" stroke="#3a85c5" stroke-width="1.1"/><path d="M1 13v1.5h11l4-4" fill="none" stroke="#3a85c5"/><path d="M6 3l1-2h5v8h-6z" fill="#e6e6e6" stroke="#666" stroke-width="0.9"/></svg>
<div class="a" style="left:35px;top:643.9px;font-size:10.6px;line-height:14px;color:#1e1e1e;">DIN</div>
<div class="a" style="left:56px;top:643.9px;font-size:10.6px;line-height:14px;color:#1e1e1e;">EN</div>
<div class="a" style="left:72px;top:643.9px;font-size:10.6px;line-height:14px;color:#1e1e1e;">ISO</div>
<div class="a" style="left:95px;top:643.9px;font-size:10.6px;line-height:14px;color:#1e1e1e;">10642</div>
<div class="a" style="left:126px;top:643.9px;font-size:10.6px;line-height:14px;color:#1e1e1e;">M5</div>
<div class="a" style="left:147px;top:643.9px;font-size:10.6px;line-height:14px;color:#1e1e1e;">x</div>
<div class="a" style="left:158px;top:643.9px;font-size:10.6px;line-height:14px;color:#1e1e1e;">30:1</div>
<svg style="left:2px;top:665px" width="16" height="11"><path d="M5 1v8M1 5h8" stroke="#666" stroke-width="1.6"/><path d="M11 5.5h4" stroke="#aaa" stroke-dasharray="1 1"/></svg>
<svg style="left:17px;top:663px" width="17" height="15"><path d="M1 13l4-4h11l-4 4z" fill="#fff" stroke="#3a85c5" stroke-width="1.1"/><path d="M1 13v1.5h11l4-4" fill="none" stroke="#3a85c5"/><path d="M6 3l1-2h5v8h-6z" fill="#e6e6e6" stroke="#666" stroke-width="0.9"/></svg>
<div class="a" style="left:35px;top:663.9px;font-size:10.6px;line-height:14px;color:#1e1e1e;">DIN</div>
<div class="a" style="left:56px;top:663.9px;font-size:10.6px;line-height:14px;color:#1e1e1e;">EN</div>
<div class="a" style="left:72px;top:663.9px;font-size:10.6px;line-height:14px;color:#1e1e1e;">ISO</div>
<div class="a" style="left:95px;top:663.9px;font-size:10.6px;line-height:14px;color:#1e1e1e;">10642</div>
<div class="a" style="left:126px;top:663.9px;font-size:10.6px;line-height:14px;color:#1e1e1e;">M5</div>
<div class="a" style="left:147px;top:663.9px;font-size:10.6px;line-height:14px;color:#1e1e1e;">x</div>
<div class="a" style="left:158px;top:663.9px;font-size:10.6px;line-height:14px;color:#1e1e1e;">30:2</div>
<svg style="left:2px;top:685px" width="16" height="11"><path d="M5 1v8M1 5h8" stroke="#666" stroke-width="1.6"/><path d="M11 5.5h4" stroke="#aaa" stroke-dasharray="1 1"/></svg>
<svg style="left:17px;top:683px" width="17" height="15"><path d="M1 13l4-4h11l-4 4z" fill="#fff" stroke="#3a85c5" stroke-width="1.1"/><path d="M1 13v1.5h11l4-4" fill="none" stroke="#3a85c5"/><path d="M6 3l1-2h5v8h-6z" fill="#e6e6e6" stroke="#666" stroke-width="0.9"/></svg>
<div class="a" style="left:35px;top:683.9px;font-size:10.6px;line-height:14px;color:#1e1e1e;">DIN</div>
<div class="a" style="left:56px;top:683.9px;font-size:10.6px;line-height:14px;color:#1e1e1e;">EN</div>
<div class="a" style="left:72px;top:683.9px;font-size:10.6px;line-height:14px;color:#1e1e1e;">ISO</div>
<div class="a" style="left:95px;top:683.9px;font-size:10.6px;line-height:14px;color:#1e1e1e;">10642</div>
<div class="a" style="left:126px;top:683.9px;font-size:10.6px;line-height:14px;color:#1e1e1e;">M5</div>
<div class="a" style="left:147px;top:683.9px;font-size:10.6px;line-height:14px;color:#1e1e1e;">x</div>
<div class="a" style="left:158px;top:683.9px;font-size:10.6px;line-height:14px;color:#1e1e1e;">30:3</div>
<svg style="left:2px;top:705px" width="16" height="11"><path d="M5 1v8M1 5h8" stroke="#666" stroke-width="1.6"/><path d="M11 5.5h4" stroke="#aaa" stroke-dasharray="1 1"/></svg>
<svg style="left:17px;top:703px" width="17" height="15"><path d="M1 13l4-4h11l-4 4z" fill="#fff" stroke="#3a85c5" stroke-width="1.1"/><path d="M1 13v1.5h11l4-4" fill="none" stroke="#3a85c5"/><path d="M6 3l1-2h5v8h-6z" fill="#e6e6e6" stroke="#666" stroke-width="0.9"/></svg>
<div class="a" style="left:35px;top:703.9px;font-size:10.6px;line-height:14px;color:#1e1e1e;">DIN</div>
<div class="a" style="left:56px;top:703.9px;font-size:10.6px;line-height:14px;color:#1e1e1e;">EN</div>
<div class="a" style="left:72px;top:703.9px;font-size:10.6px;line-height:14px;color:#1e1e1e;">ISO</div>
<div class="a" style="left:95px;top:703.9px;font-size:10.6px;line-height:14px;color:#1e1e1e;">10642</div>
<div class="a" style="left:126px;top:703.9px;font-size:10.6px;line-height:14px;color:#1e1e1e;">M5</div>
<div class="a" style="left:147px;top:703.9px;font-size:10.6px;line-height:14px;color:#1e1e1e;">x</div>
<div class="a" style="left:158px;top:703.9px;font-size:10.6px;line-height:14px;color:#1e1e1e;">30:4</div>
<svg style="left:2px;top:725px" width="16" height="11"><path d="M5 1v8M1 5h8" stroke="#666" stroke-width="1.6"/><path d="M11 5.5h4" stroke="#aaa" stroke-dasharray="1 1"/></svg>
<svg style="left:17px;top:723px" width="17" height="15"><path d="M1 13l4-4h11l-4 4z" fill="#fff" stroke="#3a85c5" stroke-width="1.1"/><path d="M1 13v1.5h11l4-4" fill="none" stroke="#3a85c5"/><path d="M6 3l1-2h5v8h-6z" fill="#e6e6e6" stroke="#666" stroke-width="0.9"/></svg>
<div class="a" style="left:35px;top:723.9px;font-size:10.6px;line-height:14px;color:#1e1e1e;">DIN</div>
<div class="a" style="left:56px;top:723.9px;font-size:10.6px;line-height:14px;color:#1e1e1e;">EN</div>
<div class="a" style="left:72px;top:723.9px;font-size:10.6px;line-height:14px;color:#1e1e1e;">ISO</div>
<div class="a" style="left:94px;top:723.9px;font-size:10.6px;line-height:14px;color:#1e1e1e;">4762</div>
<div class="a" style="left:120px;top:723.9px;font-size:10.6px;line-height:14px;color:#1e1e1e;">M8</div>
<div class="a" style="left:137px;top:723.9px;font-size:10.6px;line-height:14px;color:#1e1e1e;">x</div>
<div class="a" style="left:146px;top:723.9px;font-size:10.6px;line-height:14px;color:#1e1e1e;">45:2</div>
<svg style="left:2px;top:745px" width="16" height="11"><path d="M5 1v8M1 5h8" stroke="#666" stroke-width="1.6"/><path d="M11 5.5h4" stroke="#aaa" stroke-dasharray="1 1"/></svg>
<svg style="left:17px;top:743px" width="17" height="15"><path d="M1 13l4-4h11l-4 4z" fill="#fff" stroke="#3a85c5" stroke-width="1.1"/><path d="M1 13v1.5h11l4-4" fill="none" stroke="#3a85c5"/><path d="M6 3l1-2h5v8h-6z" fill="#e6e6e6" stroke="#666" stroke-width="0.9"/></svg>
<div class="a" style="left:35px;top:743.9px;font-size:10.6px;line-height:14px;color:#1e1e1e;">DIN</div>
<div class="a" style="left:56px;top:743.9px;font-size:10.6px;line-height:14px;color:#1e1e1e;">EN</div>
<div class="a" style="left:72px;top:743.9px;font-size:10.6px;line-height:14px;color:#1e1e1e;">ISO</div>
<div class="a" style="left:94px;top:743.9px;font-size:10.6px;line-height:14px;color:#1e1e1e;">4762</div>
<div class="a" style="left:120px;top:743.9px;font-size:10.6px;line-height:14px;color:#1e1e1e;">M8</div>
<div class="a" style="left:137px;top:743.9px;font-size:10.6px;line-height:14px;color:#1e1e1e;">x</div>
<div class="a" style="left:146px;top:743.9px;font-size:10.6px;line-height:14px;color:#1e1e1e;">45:3</div>
<svg style="left:2px;top:765px" width="16" height="11"><path d="M5 1v8M1 5h8" stroke="#666" stroke-width="1.6"/><path d="M11 5.5h4" stroke="#aaa" stroke-dasharray="1 1"/></svg>
<svg style="left:17px;top:763px" width="17" height="15"><path d="M1 13l4-4h11l-4 4z" fill="#fff" stroke="#3a85c5" stroke-width="1.1"/><path d="M1 13v1.5h11l4-4" fill="none" stroke="#3a85c5"/><path d="M6 3l1-2h5v8h-6z" fill="#e6e6e6" stroke="#666" stroke-width="0.9"/></svg>
<div class="a" style="left:35px;top:763.9px;font-size:10.6px;line-height:14px;color:#1e1e1e;">DIN</div>
<div class="a" style="left:56px;top:763.9px;font-size:10.6px;line-height:14px;color:#1e1e1e;">EN</div>
<div class="a" style="left:72px;top:763.9px;font-size:10.6px;line-height:14px;color:#1e1e1e;">ISO</div>
<div class="a" style="left:94px;top:763.9px;font-size:10.6px;line-height:14px;color:#1e1e1e;">4762</div>
<div class="a" style="left:120px;top:763.9px;font-size:10.6px;line-height:14px;color:#1e1e1e;">M8</div>
<div class="a" style="left:137px;top:763.9px;font-size:10.6px;line-height:14px;color:#1e1e1e;">x</div>
<div class="a" style="left:146px;top:763.9px;font-size:10.6px;line-height:14px;color:#1e1e1e;">45:1</div>
<svg style="left:347px;top:1108px" width="16" height="16"><path d="M1.5 8l6.5-6.5 6.5 6.5M3 7v7.5h3.5v-4h3v4h3.5v-7.5" fill="none" stroke="#555" stroke-width="1.4"/></svg>
<div class="a" style="left:366px;top:1109.8px;font-size:12px;line-height:14px;color:#555;">Startseite</div>
<div class="a" style="left:431px;top:1109.0px;font-size:11.6px;line-height:14px;color:#2a8fd8;">Werkstückanschlag.iam</div>
<svg style="left:558px;top:1110px" width="10" height="10"><path d="M1 1l8 8M9 1l-8 8" stroke="#555" stroke-width="1.4"/></svg>
<svg style="left:1899px;top:1109px" width="15" height="13"><path d="M0 1.5h14M0 6.5h14M0 11.5h14" stroke="#555" stroke-width="1.6"/></svg>
<div class="a" style="left:2px;top:1134.2px;font-size:11px;line-height:14px;color:#222;">Bereit</div>
<div class="a" style="left:1842px;top:1131px;width:1px;height:20px;background:#d0d0d0;"></div>
<div class="a" style="left:1882px;top:1131px;width:1px;height:20px;background:#d0d0d0;"></div>
<div class="a" style="left:1850px;top:1133.2px;font-size:11px;line-height:14px;color:#333;">24</div>
<div class="a" style="left:1889px;top:1133.2px;font-size:11px;line-height:14px;color:#333;">15</div>
<svg style="left:342px;top:144px" width="1576" height="960" viewBox="342 144 1576 960"><defs>
<linearGradient id="gFront" gradientUnits="userSpaceOnUse" x1="1000" y1="389" x2="1036" y2="478">
 <stop offset="0" stop-color="#b8bf9f"/><stop offset="0.3" stop-color="#bdc2a8"/><stop offset="0.5" stop-color="#b3b4a8"/>
 <stop offset="0.65" stop-color="#a6a5a0"/><stop offset="1" stop-color="#b0afaa"/></linearGradient>
<linearGradient id="gFrontL" gradientUnits="userSpaceOnUse" x1="870" y1="490" x2="1100" y2="395">
 <stop offset="0" stop-color="#c8c8c4" stop-opacity="0.75"/><stop offset="0.45" stop-color="#b8b8b2" stop-opacity="0.35"/><stop offset="1" stop-color="#b8b8b2" stop-opacity="0"/></linearGradient>
<linearGradient id="gBack" gradientUnits="userSpaceOnUse" x1="950" y1="355" x2="965" y2="400">
 <stop offset="0" stop-color="#b9c0a2"/><stop offset="1" stop-color="#a9b090"/></linearGradient>
<linearGradient id="gRightFace" gradientUnits="userSpaceOnUse" x1="930" y1="570" x2="850" y2="930">
 <stop offset="0" stop-color="#7a7a77"/><stop offset="0.45" stop-color="#929290"/><stop offset="0.8" stop-color="#a6a6a3"/><stop offset="1" stop-color="#9a9a97"/></linearGradient>
<linearGradient id="gTopBlk" gradientUnits="userSpaceOnUse" x1="0" y1="532" x2="0" y2="608">
 <stop offset="0" stop-color="#6c6c66"/><stop offset="0.35" stop-color="#76766e"/><stop offset="0.55" stop-color="#a4a49a"/><stop offset="0.72" stop-color="#d8d8ca"/><stop offset="0.86" stop-color="#a6a69c"/><stop offset="1" stop-color="#8a8a82"/></linearGradient>
<linearGradient id="gDark" x1="0" y1="0" x2="1" y2="1">
 <stop offset="0" stop-color="#6a6a66"/><stop offset="1" stop-color="#4e4e4b"/></linearGradient>
<linearGradient id="gHeadL" x1="0" y1="0" x2="1" y2="0">
 <stop offset="0" stop-color="#3a3a38"/><stop offset="0.45" stop-color="#8a8a82"/><stop offset="0.6" stop-color="#4a4a46"/><stop offset="1" stop-color="#2e2e2c"/></linearGradient>
<linearGradient id="gBaseFront" x1="0" y1="0" x2="1" y2="0">
 <stop offset="0" stop-color="#6a6a66"/><stop offset="0.3" stop-color="#62625e"/><stop offset="0.55" stop-color="#5a5a57"/><stop offset="1" stop-color="#686864"/></linearGradient>
<linearGradient id="gSilver" gradientUnits="userSpaceOnUse" x1="930" y1="380" x2="1060" y2="350">
 <stop offset="0" stop-color="#c8c8c0"/><stop offset="0.35" stop-color="#a8a8a0"/><stop offset="0.55" stop-color="#f4f4f0"/><stop offset="0.75" stop-color="#c0c0b8"/><stop offset="1" stop-color="#9a9a92"/></linearGradient>
<linearGradient id="gVert" x1="0" y1="0" x2="1" y2="0"><stop offset="0" stop-color="#4a4a47"/><stop offset="0.5" stop-color="#6a6a66"/><stop offset="1" stop-color="#505050"/></linearGradient>
<linearGradient id="gHeadTop" gradientUnits="userSpaceOnUse" x1="1100" y1="205" x2="1215" y2="228"><stop offset="0" stop-color="#858580"/><stop offset="0.5" stop-color="#74746f"/><stop offset="1" stop-color="#8a8a85"/></linearGradient>
<radialGradient id="gShadow" cx="0.5" cy="0.5" r="0.5"><stop offset="0" stop-color="#4a78b0" stop-opacity="0.55"/><stop offset="1" stop-color="#4a78b0" stop-opacity="0"/></radialGradient>
</defs><path d="M811,436 Q810,418 826,408 L1077,304 L1090,360 L1090,420 L870,520 L823,466 Z" fill="url(#gBack)" stroke="#111" stroke-width="1" stroke-linejoin="round"/><path d="M811,436 Q810,418 826,408 L845,402 L850,470 L823,466 Z" fill="#c6c6c0"/><path d="M811,436 Q810,418 826,408 L1077,304" fill="none" stroke="#111" stroke-width="1"/><path d="M814,430 Q814,418 828,411.5 L1077,307.5" fill="none" stroke="#f4f4f0" stroke-width="4"/><path d="M816,436 Q816,421 830,415 L1077,311" fill="none" stroke="#111" stroke-width="0.9"/><path d="M811,436 L822,469 M816,436 L825,462" fill="none" stroke="#111" stroke-width="0.9"/><path d="M813,436 L823,466" fill="none" stroke="#dcdcd6" stroke-width="3"/><path d="M826,461 Q826,425 848,411 Q866,402 890,412 Q900,416 906,422 L900,470 L855,470 Z" fill="#c8c8c0" stroke="#111" stroke-width="1" stroke-linejoin="round"/><path d="M826,461 Q826,425 848,411 Q866,402 890,412 L891,415 Q878,411 862,419 Q846,430 840,468 Z" fill="#d6d6ce"/><path d="M832,445 Q838,425 852,415 L866,410 L872,414 Q852,424 846,450 Z" fill="#ececE6" opacity="0.9"/><path d="M868,406 Q880,405 890,412 L884,415 Q876,412 866,413 Z" fill="#9a9a92"/><path d="M840,468 Q842,435 862,419 Q878,411 891,415 Q900,418 905,422" fill="none" stroke="#111" stroke-width="0.9"/><path d="M854,466 Q856,440 870,432 Q886,426 905,427 L896,470 Z" fill="#7a7a72" stroke="#111" stroke-width="1" stroke-linejoin="round"/><path d="M860,462 Q862,444 874,436" fill="none" stroke="#c8c8c0" stroke-width="3"/><path d="M921,418 Q927,404 926,386 Q926,376 937,375 L952,376 Q972,378 994,369 Q1008,360 1020,342 Q1026,336 1034,339 L1063,360 L1000,392 L940,418 Z" fill="url(#gSilver)" stroke="#111" stroke-width="1" stroke-linejoin="round"/><path d="M937,375 L970,410 M952,376 L982,404 M1034,339 L1050,372 M1022,342 L1040,378" stroke="#333" stroke-width="0.7"/><path d="M985,372 L1010,392" stroke="#ffffff" stroke-width="7" opacity="0.8"/><path d="M926,395 Q930,384 942,382 L960,404 L935,416 Z" fill="#d4d4ce"/><path d="M1070,338 Q1080,334 1086,346 L1090,358 L1068,368 Z" fill="#c8c8c0" stroke="#111" stroke-width="1" stroke-linejoin="round"/><polygon points="1082,278 1123,294 1118,350 1087,350 1074,336" fill="url(#gVert)" stroke="#111" stroke-width="1" stroke-linejoin="round"/><polygon points="1123,294 1206,290 1200,345 1118,350" fill="#65703a" stroke="#111" stroke-width="1" stroke-linejoin="round"/><polygon points="1123,294 1132,294 1127,350 1118,350" fill="#8a8f70" stroke="#111" stroke-width="1" stroke-linejoin="round"/><polygon points="822,462 852,466 868,460 862,490" fill="#c4c4bc"/><polygon points="823,463 862,488 859,543 817,515" fill="#5e5e5a" stroke="#111" stroke-width="1" stroke-linejoin="round"/><polygon points="823,463 862,488 862,492 822,467" fill="#8a8c80"/><polygon points="859,543 898,535 941,518 941,538 906,548 858,552" fill="#6d6d68" stroke="#111" stroke-width="1" stroke-linejoin="round"/><polygon points="850,470 866,462 878,527 884,540 859,543 862,488" fill="#8a8a84" stroke="#111" stroke-width="1" stroke-linejoin="round"/><path d="M859,460 Q858,448 872,442 L1168,321 Q1192,313 1198,334 L1208,385 Q1210,404 1192,413 L898,535 Q880,541 875,524 Z" fill="url(#gFront)" stroke="#111" stroke-width="1" stroke-linejoin="round"/><path d="M859,460 Q858,448 872,442 L1168,321 Q1192,313 1198,334 L1208,385 Q1210,404 1192,413 L898,535 Q880,541 875,524 Z" fill="url(#gFrontL)"/><path d="M862,452 Q864,446 872,444.5 L1170,323" fill="none" stroke="#fbfbfb" stroke-width="3.6"/><path d="M866,455 Q868,450 876,448 L1174,326" fill="none" stroke="#111" stroke-width="0.8"/><path d="M862,470 L878,527" stroke="#111" stroke-width="0.8"/><circle cx="1080" cy="411" r="15" fill="#e6e6e2" stroke="#111"/><circle cx="1079" cy="410" r="12" fill="#474946" stroke="#111"/><circle cx="1079" cy="410" r="4" fill="none" stroke="#222" stroke-width="0.8"/><path d="M813.0,548 Q817.0,537 826,537 L919,554 L933,556 L944,576 L945,596 L861.0,930 Q857,941 846,939 L741,917 L727,897 Z" fill="#f7f7f7" stroke="#111" stroke-width="1" stroke-linejoin="round"/><polygon points="727,897 740,899 746,918 741,917" fill="#8e8e8a" stroke="#111" stroke-width="1" stroke-linejoin="round"/><path d="M927.0,562 L933,557 L944,576 L945,596 L861.0,930 Q857,941 846,939 L833.8,935 Z" fill="url(#gRightFace)" stroke="#111" stroke-width="1" stroke-linejoin="round"/><path d="M919.5,550 L823.2,935" stroke="#111" stroke-width="0.9"/><path d="M732.0,872 L742.5,874" stroke="#222" stroke-width="0.8"/><polygon points="816.0,596.0 904.1,611.6 828.1,915.6 740.0,900.0" fill="#cfcfc9"/><polygon points="816.0,596.0 848.6,601.8 832.6,665.8 800.0,660.0" fill="#d9d9d3" stroke="#111" stroke-width="1" stroke-linejoin="round"/><path d="M808.8,625.0 841.3,630.8 M805.0,640.0 837.6,645.8" stroke="#222" stroke-width="0.8"/><polygon points="804.8,641.0 837.3,646.8 832.6,665.8 800.0,660.0" fill="#f4f4f2" stroke="#111" stroke-width="1" stroke-linejoin="round"/><polygon points="884.0,608.1 904.1,611.6 888.1,675.6 868.0,672.1" fill="#d9d9d3" stroke="#111" stroke-width="1" stroke-linejoin="round"/><path d="M875.5,642.1 895.6,645.6 M871.7,657.1 891.8,660.6" stroke="#222" stroke-width="0.8"/><polygon points="871.5,658.1 891.6,661.6 888.1,675.6 868.0,672.1" fill="#f4f4f2" stroke="#111" stroke-width="1" stroke-linejoin="round"/><polygon points="850.0,604.1 883.5,610.1 877.0,636.1 843.0,632.1" fill="#707070" stroke="#111" stroke-width="1" stroke-linejoin="round"/><path d="M844.9,632.5 L877.0,636.1 L865.1,671.6 L832.6,665.8 Q833.7,645.1 844.9,632.5 Z" fill="#a8ccf3" stroke="#111" stroke-width="1" stroke-linejoin="round"/><polygon points="798.1,659.7 888.1,675.6 857.8,796.6 767.8,780.7" fill="#f7f7f5" stroke="#111" stroke-width="1" stroke-linejoin="round"/><polygon points="795.1,671.7 885.1,687.6 877.6,717.6 787.6,701.7" fill="#cdcec4"/><polygon points="773.1,759.7 863.1,775.6 857.8,796.6 767.8,780.7" fill="#d2d2ca"/><path d="M797.1,663.7 887.1,679.6 M796.1,667.7 886.1,683.6 M795.1,671.7 885.1,687.6 M772.6,761.7 862.6,777.6 M771.1,767.7 861.1,783.6 M769.6,773.7 859.6,789.6" stroke="#222" stroke-width="0.7"/><path d="M843.1,667.6 Q824.3,727.0 813.8,788.8" fill="none" stroke="#111" stroke-width="0.9"/><polygon points="769.8,781.0 804.2,787.1 793.8,820.8 761.2,815.0" fill="#dcdcd6" stroke="#111" stroke-width="1" stroke-linejoin="round"/><polygon points="838.7,793.2 857.8,796.6 848.1,835.6 827.0,831.9" fill="#dcdcd6" stroke="#111" stroke-width="1" stroke-linejoin="round"/><polygon points="804.2,787.1 838.7,793.2 833.0,807.9 800.5,802.1" fill="#8e8e8a" stroke="#111" stroke-width="1" stroke-linejoin="round"/><path d="M802.4,802.5 L834.9,808.2 L815.4,846.5 L786.6,841.4 Z" fill="#b0d2f4" stroke="#111" stroke-width="1" stroke-linejoin="round"/><path d="M767,822 Q790,816 797,832 Q780,850 780,900 L746,898 Q744,850 767,822 Z" fill="#f3f3f1" stroke="#111" stroke-width="1" stroke-linejoin="round"/><path d="M750,856 L782,862 L781,898 L746,896 Z" fill="#c9c9c2"/><path d="M820,837 Q835,832 846,836 L833,910 L810,907 Q808,860 820,837 Z" fill="#f3f3f1" stroke="#111" stroke-width="1" stroke-linejoin="round"/><path d="M813,866 L842,870 L834,908 L810,905 Z" fill="#c9c9c2"/><path d="M784,842 Q790,838 812,845 L814,850 Q808,870 812,898 L780,893 Q776,860 784,842 Z" fill="#9c9c98" stroke="#111" stroke-width="1" stroke-linejoin="round"/><path d="M782,870 Q796,862 812,874 L812,898 L780,893 Z" fill="#5c5c5a"/><ellipse cx="803" cy="857" rx="14" ry="8" fill="#f6f6f6" stroke="#111"/><ellipse cx="805" cy="857" rx="9" ry="5" fill="#3a3a38"/><path d="M805,852 L805,862" stroke="#ccc" stroke-width="0.8"/><ellipse cx="880" cy="796" rx="5" ry="12" transform="rotate(14 880 796)" fill="#d8d8d4" stroke="#222" stroke-width="0.8"/><ellipse cx="879" cy="796" rx="3.5" ry="10" transform="rotate(14 879 796)" fill="#3e3e3c"/><polygon points="821.428,556 825.252,556 743.935,905 738.715,905" fill="#8c8c88" stroke="#111" stroke-width="1" stroke-linejoin="round"/><polygon points="823.5,529 912.7,546.4 901.7,610.6 817,595" fill="url(#gTopBlk)" stroke="#111" stroke-width="1" stroke-linejoin="round"/><polygon points="912.7,546.4 933,540 933,556 918,556 904.5,610 901.7,610.6" fill="#4e4e4b" stroke="#111" stroke-width="1" stroke-linejoin="round"/><polygon points="746,897 831,913 831,956 744,941" fill="#5b5b58" stroke="#111" stroke-width="1" stroke-linejoin="round"/><polygon points="831,913 848,906 852,940 831,956" fill="#6a6a66" stroke="#111" stroke-width="1" stroke-linejoin="round"/><polygon points="746,897 831,913 831,915 746,899" fill="#f4f4f4"/><path d="M555,975 Q556,968 564,968 L1032,968 Q1040,969 1041,976 L1043,1052 Q1043,1059 1036,1059 L566,1059 Q557,1058 557,1052 Z" fill="#f9f9f9" stroke="#111" stroke-width="1" stroke-linejoin="round"/><path d="M558,1030 L1043,1030 L1043,1052 Q1043,1059 1036,1059 L566,1059 Q557,1058 557,1052 Z" fill="url(#gBaseFront)" stroke="#111" stroke-width="1" stroke-linejoin="round"/><path d="M567,1030 L567,1059 M1035,1030 L1035,1059" stroke="#222" stroke-width="0.8"/><path d="M614.5,988 L666.5,988 A17 11 0 0 1 666.5,1010 L614.5,1010 A17 11 0 0 1 614.5,988 Z" fill="#5a5a57" stroke="#111" stroke-width="1" stroke-linejoin="round"/><path d="M615.5,989 L615.5,1009 M664.5,989 L664.5,1009" stroke="#222" stroke-width="0.8"/><path d="M931.5,988 L983.5,988 A17 11 0 0 1 983.5,1010 L931.5,1010 A17 11 0 0 1 931.5,988 Z" fill="#5a5a57" stroke="#111" stroke-width="1" stroke-linejoin="round"/><path d="M932.5,989 L932.5,1009 M981.5,989 L981.5,1009" stroke="#222" stroke-width="0.8"/><polygon points="752,948 850,950 848,1025 754,1025" fill="#5f5f5c" stroke="#111" stroke-width="1" stroke-linejoin="round"/><polygon points="752,948 760,950 762,1025 754,1025" fill="#6e6e6a"/><polygon points="754,947 850,950 850,955 756,951" fill="#f6f6f6"/><polygon points="1087,240 1150,266 1215,260 1210,293 1145,300 1082,279" fill="#3f3f3d" stroke="#111" stroke-width="1" stroke-linejoin="round"/><polygon points="1087,240 1150,266 1145,300 1082,279" fill="url(#gHeadL)" stroke="#111" stroke-width="1" stroke-linejoin="round"/><polygon points="1093,205 1154,197 1219,225 1154,234" fill="url(#gHeadTop)"/><polygon points="1093,205 1154,234 1150,266 1087,240" fill="url(#gHeadL)"/><polygon points="1154,234 1219,225 1215,260 1150,266" fill="#434341"/><ellipse cx="1156" cy="216" rx="20" ry="7" fill="#b4b4ac" stroke="#e02020" stroke-width="1"/><ellipse cx="1157" cy="218" rx="14" ry="4.5" fill="#8a8a80"/><path d="M1149,219 L1156,214 L1165,217 L1160,221 Z" fill="#6a7a40" stroke="#222" stroke-width="0.6"/><path d="M1154,234 L1150,266" stroke="#eeeeee" stroke-width="3"/><path d="M1149,267 L1145,300" stroke="#eeeeee" stroke-width="3"/><polygon points="1093,205 1154,197 1219,225 1215,260 1150,266 1087,240" fill="none" stroke="#ff1a1a" stroke-width="1.2"/><path d="M1093,205 L1154,234 L1219,225 M1154,234 L1150,266" fill="none" stroke="#ff1a1a" stroke-width="1.2"/><polygon points="1076,264.5 1148,253.5 1148,267.5 1076,278" fill="#62625c"/><polygon points="1076,264.5 1148,253.5 1148,262.18 1076,272.87" fill="#8e8f7c"/><path d="M1076,267.0 L1148,256.0" stroke="#c4c4b4" stroke-width="1.8" stroke-dasharray="3 4"/><path d="M1076,270.5 L1148,259.5" stroke="#a8a898" stroke-width="1.6" stroke-dasharray="2 3"/><path d="M1076,271.87 L1148,261.18" stroke="#5e6a3a" stroke-width="1.4" stroke-dasharray="3 2"/><path d="M1076,264.5 L1148,253.5" stroke="#6a6658" stroke-width="1"/><polygon points="1213,244 1380,223.5 1380,239.5 1213,260.5" fill="#62625c"/><polygon points="1213,244 1380,223.5 1380,233.42 1213,254.23" fill="#8e8f7c"/><path d="M1213,246.5 L1380,226.0" stroke="#c4c4b4" stroke-width="1.8" stroke-dasharray="3 4"/><path d="M1213,250 L1380,229.5" stroke="#a8a898" stroke-width="1.6" stroke-dasharray="2 3"/><path d="M1213,253.23 L1380,232.42" stroke="#5e6a3a" stroke-width="1.4" stroke-dasharray="3 2"/><path d="M1213,244 L1380,223.5" stroke="#6a6658" stroke-width="1"/><path d="M1380,223.5 L1393,225 Q1400,229 1393,234 L1380,239.5 Z" fill="#5f6050" stroke="#111" stroke-width="1"/><path d="M1381,226 L1396,228" stroke="#7a8a50" stroke-width="2"/><circle cx="1082" cy="271" r="7" fill="#40403d" stroke="#111"/></svg>
<svg style="left:1862px;top:148px" width="56" height="16"><path d="M4 11.5h8" stroke="#333" stroke-width="1.6"/><rect x="23.5" y="2.5" width="11" height="10" fill="none" stroke="#333" stroke-width="1.3"/><path d="M23.5 5.5h11M29 5.5v7" stroke="#333" stroke-width="1.1"/><path d="M44 2.5l9.5 9.5M53.5 2.5l-9.5 9.5" stroke="#333" stroke-width="1.6"/></svg>
<svg style="left:1815px;top:190px" width="90" height="90"><defs><linearGradient id="vc" x1="0" y1="0" x2="0" y2="1"><stop offset="0" stop-color="#b3cff0"/><stop offset="1" stop-color="#a2bedf"/></linearGradient><filter id="blur"><feGaussianBlur stdDeviation="4"/></filter></defs><ellipse cx="44" cy="74" rx="30" ry="8" fill="#5080b8" opacity="0.45" filter="url(#blur)"/><path d="M18 8 L65 8 L70 27 L71 33 L67 74 L17 74 L16 33 L15 32 Z" fill="url(#vc)" stroke="#7a7a7a" stroke-width="1" stroke-dasharray="3 2"/><path d="M15 32.5h56" stroke="#7a7a7a" stroke-width="1" stroke-dasharray="3 2"/><rect x="27" y="37" width="34" height="13" fill="#a9c6ea" opacity="0.6"/><text x="43" y="59" font-family="Liberation Sans" font-weight="bold" font-size="12" fill="#7890a8" text-anchor="middle" letter-spacing="0.5">LINKS</text><text x="0" y="0" font-family="Liberation Sans" font-weight="bold" font-size="13" fill="#7890a8" text-anchor="middle" transform="translate(38,19) rotate(90) scale(0.48,0.9)">OBEN</text></svg>
<svg style="left:1883px;top:288px" width="36" height="232"><rect x="0.5" y="0.5" width="34" height="229" rx="4" fill="#abc8ea" stroke="#7b96ba"/><circle cx="27" cy="8" r="3.5" fill="#8aa0bc"/><path d="M25.5 6.5l3 3M28.5 6.5l-3 3" stroke="#dfe8f4" stroke-width="0.9"/><circle cx="18" cy="33" r="10.5" fill="#c5d6ea" stroke="#8795a8" stroke-width="1.2"/><circle cx="18" cy="31" r="5.5" fill="#d5e2f0" stroke="#8795a8" stroke-width="1.2"/><path d="M9 38q9-6 18 0" fill="none" stroke="#8795a8" stroke-width="1.2"/><path d="M15.5 53.5h5l-2.5 2.5z" fill="#8795a8"/><path d="M4 61.5h27" stroke="#8795a8" stroke-width="0.8"/><path d="M10 84c-3-4-4-7-2-8s3 2 5 4v-12c0-2 3-2 3 0v8-10c0-2 3-2 3 0v10-9c0-2 3-2 3 0v9-6c0-2 3-2 3 0v11c0 5-3 8-8 8h-2c-3 0-5-2-8-5z" fill="#d5e2f0" stroke="#8795a8" stroke-width="1.1"/><path d="M9 100h8l4 4v12h-12z" fill="#d5e2f0" stroke="#8795a8" stroke-width="1.1"/><circle cx="21" cy="116" r="4.5" fill="#d5e2f0" stroke="#8795a8" stroke-width="1.2"/><path d="M24 119l4 4" stroke="#8795a8" stroke-width="2"/><path d="M15.5 133h5l-2.5 2.5z" fill="#8795a8"/><ellipse cx="18" cy="154" rx="11" ry="4" fill="none" stroke="#8795a8" stroke-width="1.1"/><ellipse cx="18" cy="154" rx="4" ry="11" fill="none" stroke="#8795a8" stroke-width="1.1"/><path d="M15 154h6M18 151v6" stroke="#8795a8"/><path d="M15.5 175h5l-2.5 2.5z" fill="#8795a8"/><path d="M8 188l5-6v6M13 188l9-3v3" fill="#d5e2f0" stroke="#8795a8" stroke-width="1"/><rect x="8.5" y="188.5" width="19" height="14" fill="#d5e2f0" stroke="#8795a8" stroke-width="1.1"/><rect x="12" y="192" width="12" height="6" fill="#9fb3cc" stroke="#8795a8" stroke-width="0.8"/><circle cx="27" cy="222" r="3.5" fill="#8aa0bc"/><path d="M25 221.5h4M25 223h4" stroke="#dfe8f4" stroke-width="0.8"/></svg>
<svg style="left:360px;top:1012px" width="64" height="64"><path d="M34.5 40 L24 22" stroke="#1a2aa0" stroke-width="1.2"/><path d="M34.5 40 L44 33" stroke="#c02020" stroke-width="1.2"/><path d="M34.5 40 L23 47" stroke="#20a020" stroke-width="1.2"/><path d="M18 15 L28 19.5 L24 22 L18 26 Z" fill="#00008a"/><path d="M40 31 Q41 28 45 28.5 Q50 29 49 33 L48 37 Q46 40 43 39.5 L40 37 Z" fill="#b00000"/><path d="M45 28.5 Q50 29 49 33 L48 37 Q46 40 43 39.5 Z" fill="#800000"/><path d="M15 46 Q18 42 21 43 Q25 45 25 50 L24 53 L15 53 Z" fill="#008a00"/><text x="10.5" y="14" font-family="Liberation Sans" font-size="12" fill="#3040ff">Z</text><text x="47.5" y="31.5" font-family="Liberation Sans" font-size="11.5" fill="#ff3838">X</text><text x="5.5" y="60" font-family="Liberation Sans" font-size="12" fill="#30f040">Y</text></svg>
</body></html>
